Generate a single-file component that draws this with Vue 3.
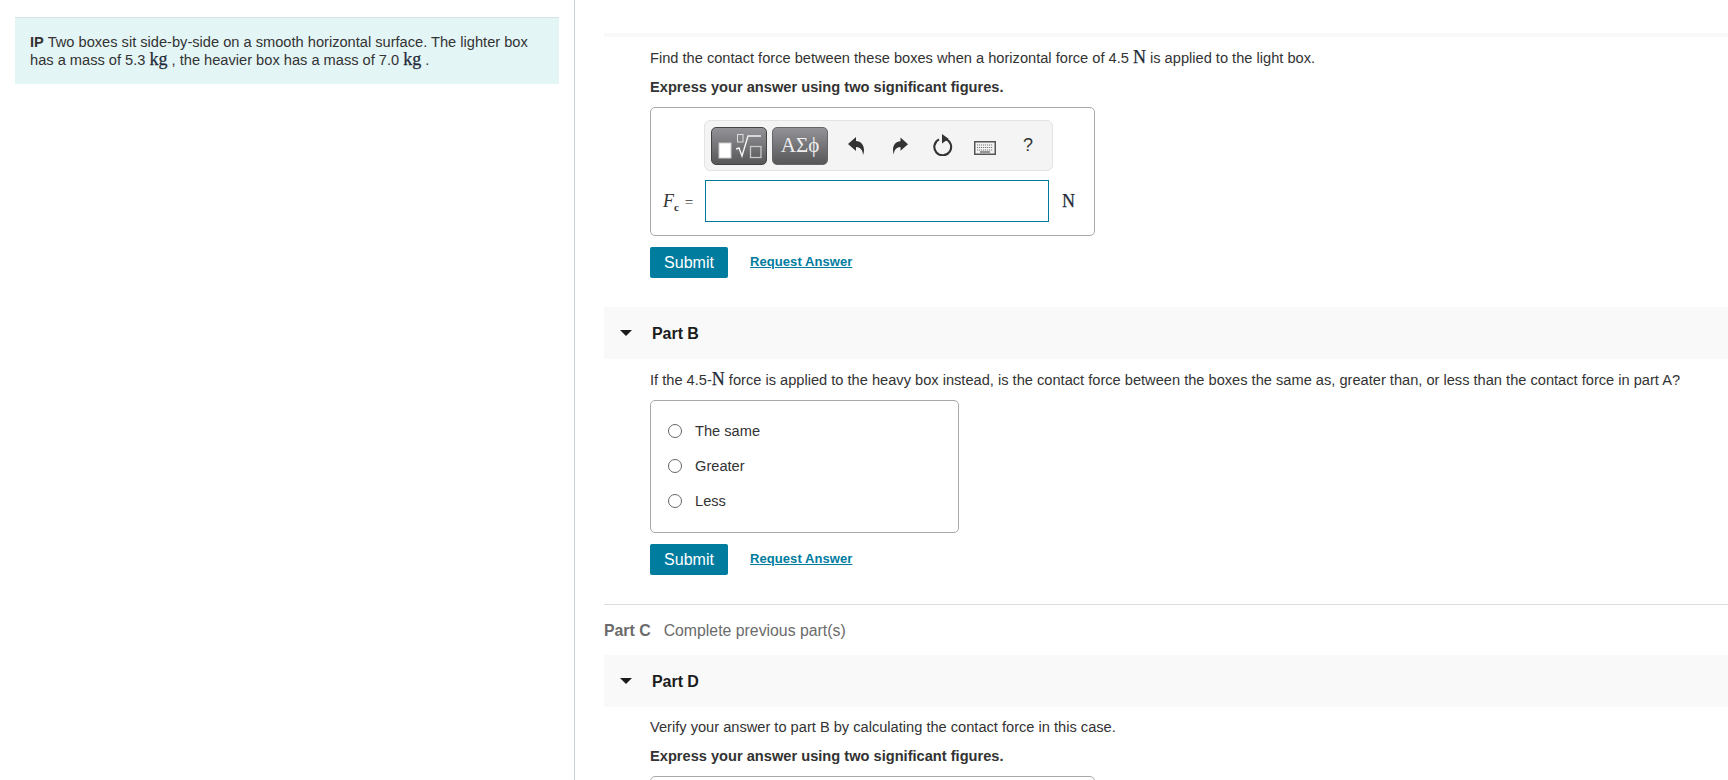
<script setup>
const options = ['The same', 'Greater', 'Less']
</script>

<template>
  <div class="page">
    <aside class="left">
      <div class="intro">
        <b>IP</b> Two boxes sit side-by-side on a smooth horizontal surface. The lighter box has a mass of 5.3 <span class="unit">kg</span> , the heavier box has a mass of 7.0 <span class="unit">kg</span> .
      </div>
    </aside>
    <main class="right">
      <div class="top-strip"></div>
      <section class="part first">
        <p class="txt">Find the contact force between these boxes when a horizontal force of 4.5 <span class="unit">N</span> is applied to the light box.</p>
        <p class="txt strong">Express your answer using two significant figures.</p>
        <div class="answer">
          <div class="toolbar">
            <button class="tool">
              <svg width="54" height="36" viewBox="0 0 54 36">
                <rect x="7" y="15" width="12" height="15" fill="#fff" stroke="#ccc" />
                <rect x="25.5" y="6.5" width="5.5" height="7.5" fill="none" stroke="#ddd" />
                <path d="M24 21 L27 20 L30 28 L36 8 H49" fill="none" stroke="#f2f2f2" stroke-width="1.4" />
                <rect x="38.5" y="18.5" width="10.5" height="11" fill="none" stroke="#c8c8c8" stroke-width="1.3" />
              </svg>
            </button>
            <button class="tool greek">ΑΣϕ</button>
            <div class="icons">
              <svg class="i-undo" width="16" height="18" viewBox="0 0 16 18"><path d="M0 7 L8 0 V4 C13 4 16 8 16 13 C16 15 15.5 17 15 18 C15 13 12 10 8 10 V14 Z" fill="#333" /></svg>
              <svg class="i-redo" width="15" height="18" viewBox="0 0 16 18"><path d="M16 7 L8 0 V4 C3 4 0 8 0 13 C0 15 .5 17 1 18 C1 13 4 10 8 10 V14 Z" fill="#333" /></svg>
              <svg class="i-reset" width="20" height="22" viewBox="0 0 20 22"><path d="M6 5.4 A8.4 8.4 0 1 0 12.5 5" fill="none" stroke="#333" stroke-width="2.1" /><path d="M9 0 L15.5 4.8 L9 9.5 Z" fill="#333" /></svg>
              <svg class="i-keys" width="22" height="14" viewBox="0 0 22 14"><rect x=".75" y=".75" width="20.5" height="12.5" fill="#f4f4f4" stroke="#555" stroke-width="1.5" /><path d="M3 4 H19 M3 6.5 H19 M3 9 H19" stroke="#777" stroke-width="1.2" stroke-dasharray="1.2 .8" /><path d="M6 11 H16" stroke="#555" stroke-width="1.2" /></svg>
              <span class="help">?</span>
            </div>
          </div>
          <div class="input-row">
            <span class="label"><i>F</i><sub>c</sub> =</span>
            <div class="input"></div>
            <span class="input-unit">N</span>
          </div>
        </div>
        <div class="actions">
          <button class="submit">Submit</button>
          <a class="request">Request Answer</a>
        </div>
      </section>

      <header class="part-head">
        <span class="caret"></span><h2>Part B</h2>
      </header>
      <section class="part">
        <p class="txt">If the 4.5-<span class="unit">N</span> force is applied to the heavy box instead, is the contact force between the boxes the same as, greater than, or less than the contact force in part A?</p>
        <div class="choices">
          <label v-for="o in options" :key="o" class="choice">
            <input type="radio" name="b" />
            <span>{{ o }}</span>
          </label>
        </div>
        <div class="actions">
          <button class="submit">Submit</button>
          <a class="request">Request Answer</a>
        </div>
      </section>

      <div class="locked">
        <b>Part C</b><span>Complete previous part(s)</span>
      </div>

      <header class="part-head">
        <span class="caret"></span><h2>Part D</h2>
      </header>
      <section class="part last">
        <p class="txt">Verify your answer to part B by calculating the contact force in this case.</p>
        <p class="txt strong">Express your answer using two significant figures.</p>
        <div class="answer clipped"></div>
      </section>
    </main>
  </div>
</template>

<style>
html, body { margin: 0; background: #fff; overflow: hidden; }
</style>

<style scoped>
.page {
  display: grid;
  grid-template-columns: 575px 1fr;
  height: 780px;
  overflow: hidden;
  font-family: "Liberation Sans", Arial, sans-serif;
  font-size: 14.63px;
  color: #333;
}
.left {
  border-right: 1px solid #c4d3df;
  padding: 17px 15px 0;
}
.intro {
  width: 544px;
  box-sizing: border-box;
  height: 67px;
  padding: 15px 15px;
  line-height: 18px;
  background: #e4f5f6;
  border-top: 1px solid #d3e3e6;
}
.unit {
  font-family: "Liberation Serif", serif;
  font-size: 18px;
  line-height: 0;
  color: #222a38;
  -webkit-text-stroke: .25px #222a38;
}
.right { padding-left: 29px; min-width: 0; }
.top-strip { margin-top: 33px; height: 4px; background: #f9f9f9; }
.part { padding-left: 46px; }
.txt { margin: 0; line-height: 20px; height: 20px; white-space: nowrap; }
.part > .txt:first-child { margin-top: 11px; }
.part.last > .txt:first-child { margin-top: 10px; }
.txt.strong { margin-top: 9px; font-weight: 700; }
.answer {
  box-sizing: border-box;
  margin-top: 10px;
  width: 445px;
  height: 129px;
  padding: 12px 0 0 53px;
  border: 1px solid #a9a9a9;
  border-radius: 5px;
}
.answer.clipped { height: 80px; }
.toolbar {
  box-sizing: border-box;
  display: flex;
  gap: 5px;
  align-items: center;
  width: 349px;
  height: 51px;
  padding: 0 0 0 6px;
  background: #f4f4f4;
  border: 1px solid #e3e3e3;
  border-radius: 6px;
}
.tool {
  box-sizing: border-box;
  width: 56px;
  height: 38px;
  padding: 0;
  border: 1px solid #444;
  border-radius: 5px;
  background: linear-gradient(#939397, #57575a);
  display: flex;
  align-items: center;
  justify-content: center;
}
.greek {
  font-family: "Liberation Serif", serif;
  font-size: 21px;
  color: #eee;
  border-color: #666;
}
.icons {
  display: flex;
  align-items: center;
  margin-left: 15px;
}
.i-redo { margin-left: 29px; }
.i-reset { margin-left: 25px; margin-top: -1px; }
.i-keys { margin-left: 21px; margin-top: 4px; }
.help { font-size: 18px; color: #333; margin-left: 27px; }
.input-row { display: flex; align-items: center; margin-top: 9px; }
.label {
  width: 42px;
  margin-left: -41px;
  font-family: "Liberation Serif", serif;
  font-size: 15px;
  color: #333;
  white-space: nowrap;
}
.label i { font-size: 18px; }
.label sub { font-size: 11px; font-weight: 700; line-height: 0; margin-right: 2px; }
.input {
  box-sizing: border-box;
  width: 344px;
  height: 42px;
  border: 1px solid #007a9c;
}
.input-unit {
  margin-left: 13px;
  font-family: "Liberation Serif", serif;
  font-size: 18px;
  color: #222a38;
  -webkit-text-stroke: .25px #222a38;
}
.actions { display: flex; align-items: center; margin-top: 11px; height: 31px; }
.submit {
  box-sizing: border-box;
  width: 78px;
  height: 31px;
  padding: 0;
  border: 0;
  border-radius: 2px;
  background: #007c9f;
  color: #fff;
  font-family: inherit;
  font-size: 16px;
}
.request {
  margin-left: 22px;
  margin-top: -3px;
  font-size: 13px;
  font-weight: 700;
  letter-spacing: .07px;
  color: #007c9f;
  text-decoration: underline;
}
.part-head {
  display: flex;
  align-items: center;
  height: 52px;
  margin-top: 29px;
  background: #f9f9f9;
}
.caret {
  width: 0;
  height: 0;
  margin-left: 16px;
  border-left: 6px solid transparent;
  border-right: 6px solid transparent;
  border-top: 6px solid #1c1c1c;
}
h2 {
  margin: 1px 0 0 20px;
  font-size: 16px;
  line-height: 20px;
  font-weight: 700;
  letter-spacing: -.05px;
  color: #1c1c1c;
}
.choices {
  box-sizing: border-box;
  width: 309px;
  height: 133px;
  margin-top: 10px;
  padding: 12px 0 0 16px;
  border: 1px solid #a9a9a9;
  border-radius: 5px;
}
.choice { display: flex; align-items: center; height: 35px; }
.choice input {
  appearance: none;
  box-sizing: border-box;
  width: 14px;
  height: 14px;
  margin: 0 13px 0 1px;
  border: 1px solid #666;
  border-radius: 50%;
  background: #fff;
}
.locked {
  margin-top: 29px;
  padding-top: 16px;
  height: 19px;
  line-height: 20px;
  border-top: 1px solid #ddd;
  font-size: 15.84px;
  color: #6b6b6b;
  white-space: nowrap;
}
.locked b { margin-right: 13px; }
.locked + .part-head { margin-top: 15px; }
</style>
